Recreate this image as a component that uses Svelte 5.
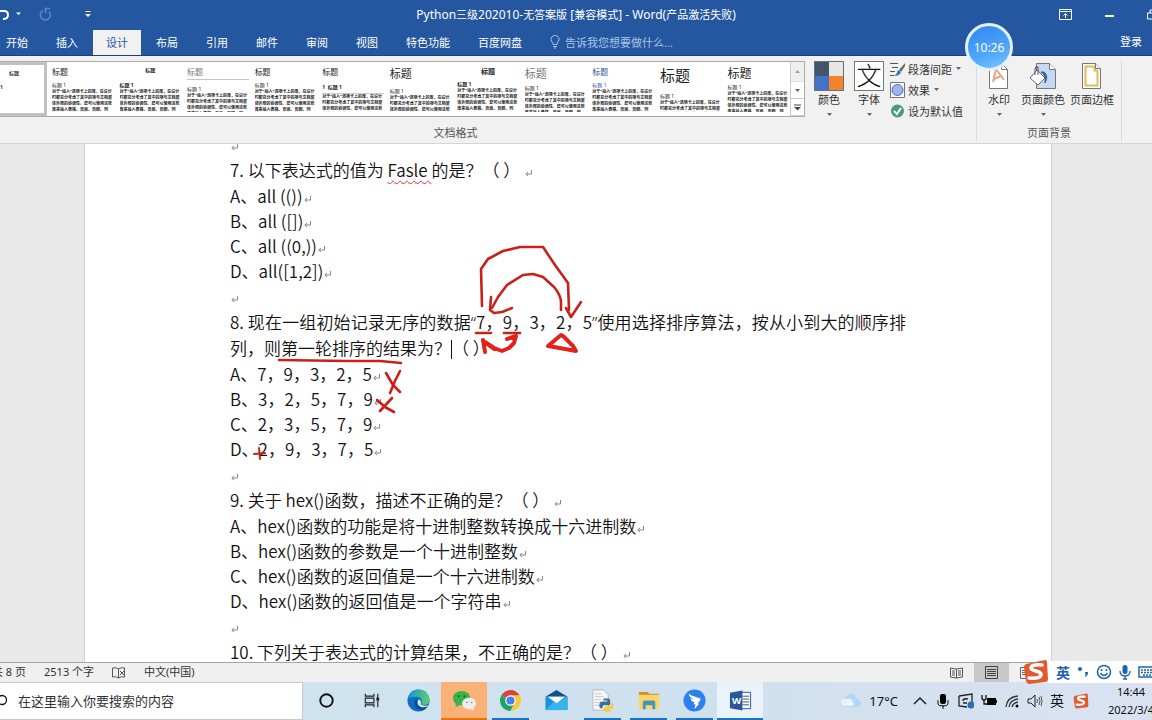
<script lang="ts">
	type Style = {
		size: number;
		space: number;
		heading?: string;
		tone?: string;
	};

	const tabs = ['开始', '插入', '设计', '布局', '引用', '邮件', '审阅', '视图', '特色功能', '百度网盘'];
	let activeTab = $state('设计');

	const sample =
		'对于"插入"选项卡上的库，在设计时都充分考虑了其中的项与文档整体外观的协调性。您可以使用这些库来插入表格、页眉、页脚、列表、封面以及';

	const styles: Style[] = [
		{ size: 8, space: 20 },
		{ size: 5, space: 20, tone: 'center bold' },
		{ size: 8, space: 24, tone: 'grey ruled' },
		{ size: 8, space: 20 },
		{ size: 8, space: 22, heading: '1  标题 1', tone: 'numbered' },
		{ size: 11, space: 26 },
		{ size: 7, space: 19, tone: 'center bold' },
		{ size: 11, space: 23, tone: 'grey' },
		{ size: 8, space: 20, tone: 'blue' },
		{ size: 15, space: 31 },
		{ size: 12, space: 22 }
	];

	const questions = [
		{
			title: '9. 关于 hex()函数，描述不正确的是？（ ）',
			options: [
				'A、hex()函数的功能是将十进制整数转换成十六进制数',
				'B、hex()函数的参数是一个十进制整数',
				'C、hex()函数的返回值是一个十六进制数',
				'D、hex()函数的返回值是一个字符串'
			]
		},
		{ title: '10. 下列关于表达式的计算结果，不正确的是？（ ）', options: [] }
	];

	const optionsSeven = ['A、all (())', 'B、all ([])', 'C、all ((0,))', 'D、all([1,2])'];
	const optionsEight = ['A、7，9，3，2，5', 'B、3，2，5，7，9', 'C、2，3，5，7，9', 'D、2，9，3，7，5'];
</script>

{#snippet mark()}
	<svg class="mark" viewBox="0 0 9 8" aria-hidden="true">
		<path d="M7.500 1v4H2M4 3 1.800 5 4 7" />
	</svg>
{/snippet}

{#snippet caret()}
	<svg class="caret" viewBox="0 0 5 3" aria-hidden="true"><path d="M0 0h5L2.500 3z" /></svg>
{/snippet}

{#snippet sogou()}
	<svg viewBox="0 0 26 26" aria-hidden="true">
		<path d="M3 5 22 1q2 0 2 2l1 17q0 3-3 3L6 25q-2 0-3-3L1 8q0-2 2-3z" fill="#e2592b" />
		<path
			d="M19 6q-11-1-11 3c0 4 11 2 10 7q-1 4-12 3"
			fill="none"
			stroke="#fff"
			stroke-width="3.500"
			stroke-linecap="round"
		/>
	</svg>
{/snippet}

<div class="window">
	<header class="chrome">
		<div class="title-bar">
			<div class="quick">
				<button aria-label="撤消">
					<svg width="26" height="14" viewBox="0 0 26 14">
						<path d="M0 4h4q4 0 4 4t-5 4" fill="none" stroke="#fff" stroke-width="2" />
						<path d="M16 5.500h5L18.500 8z" fill="#fff" />
					</svg>
				</button>
				<button aria-label="重复">
					<svg width="14" height="14" viewBox="0 0 14 14">
						<path d="M5 3.500a5 5 0 1 0 6 1M12 1.500H7.500V6" fill="none" stroke="#5e86be" stroke-width="1.600" />
					</svg>
				</button>
				<button class="customise" aria-label="自定义快速访问工具栏">
					<svg width="8" height="8" viewBox="0 0 8 8">
						<path d="M1.500 1.500h5" stroke="#fff" />
						<path d="M1 4h6L4 7z" fill="#fff" />
					</svg>
				</button>
			</div>
			<h1>
				<span>Python</span>三级<span>202010-</span>无答案版<span>{' ['}</span>兼容模式<span>{'] - Word('}</span
				>产品激活失败<span>)</span>
			</h1>
			<div class="window-buttons">
				<button aria-label="功能区显示选项">
					<svg width="13" height="11" viewBox="0 0 13 11">
						<path d="M.500 .500h12v10H.500zM.500 2.500h12M6.500 9V5M4.500 6.500l2-2 2 2" fill="none" stroke="#fff" />
					</svg>
				</button>
				<button aria-label="最小化">
					<svg width="9" height="11" viewBox="0 0 9 11"><path d="M0 7h9" stroke="#fff" stroke-width="2" /></svg>
				</button>
				<button aria-label="向下还原">
					<svg width="11" height="11" viewBox="0 0 11 11">
						<path d="M.500 4h7v6h-7zM3 4V1h7v6H8" fill="none" stroke="#fff" />
					</svg>
				</button>
			</div>
		</div>
		<nav class="tabs">
			{#each tabs as tab}
				<button class:active={tab === activeTab} onclick={() => (activeTab = tab)}>{tab}</button>
			{/each}
			<button class="tell-me">
				<svg width="10" height="14" viewBox="0 0 10 14">
					<path
						d="M3 9.500Q3 8 2 7a4 4 0 1 1 6 0q-1 1-1 2.500zM3 11.500h4M4 13h2"
						fill="none"
						stroke="#a9c3e6"
					/>
				</svg>
				告诉我您想要做什么...
			</button>
			<a class="login" href="#login">登录</a>
		</nav>
	</header>

	<section class="ribbon">
		<div class="group formats">
			<div class="group-body">
				<div class="gallery">
					<button class="current" aria-label="当前样式集">
						<b>标题</b>
						<b>1</b>
					</button>
					<div class="sets">
						{#each styles as item}
							<button class={item.tone}>
								<strong style:font-size="{item.size}px" style:height="{item.space}px">标题</strong>
								<em>{item.heading ?? '标题 1'}</em>
								<small>{sample}</small>
							</button>
						{/each}
					</div>
					<div class="gallery-scroll">
						<button class="off" aria-label="上一行">
							<svg class="caret" viewBox="0 0 5 3"><path d="M0 3h5L2.500 0z" /></svg>
						</button>
						<button aria-label="下一行">{@render caret()}</button>
						<button aria-label="其他">
							<svg width="7" height="7" viewBox="0 0 7 7">
								<path d="M0 1h7" stroke="#444" /><path d="M0 3h7L3.500 6.500z" fill="#444" />
							</svg>
						</button>
					</div>
				</div>
				<button class="large theme">
					<svg width="30" height="30" viewBox="0 0 30 30">
						<path d="M0 0h15v15H0z" fill="#44546a" />
						<path d="M15 0h15v15H15z" fill="#e7e6e6" />
						<path d="M0 15h15v15H0z" fill="#4472c4" />
						<path d="M15 15h15v15H15z" fill="#f5832c" />
						<path d="M.500 .500h29v29H.500z" fill="none" stroke="#66707c" />
					</svg>
					<span>颜色</span>
					{@render caret()}
				</button>
				<button class="large theme">
					<span class="font-icon">文</span>
					<span>字体</span>
					{@render caret()}
				</button>
				<div class="small-buttons">
					<button>
						<svg width="16" height="16" viewBox="0 0 16 16">
							<path d="M0 2.500h8M2 6.500h6M0 10.500h5M0 14.500h4" stroke="#555" />
							<path d="M15 2v3l-4 6-2-2z" fill="#666" />
							<path d="m8 9 3 2q-1 4-7 4 3-2 4-6z" fill="#3f78c0" />
						</svg>
						段落间距 {@render caret()}
					</button>
					<button>
						<svg width="16" height="16" viewBox="0 0 16 16">
							<path d="M.500 .500h14v15H.500z" fill="#fff" stroke="#6a7686" />
							<circle cx="7.500" cy="8" r="5.500" fill="#9fb4ea" stroke="#4c6ab5" />
						</svg>
						效果 {@render caret()}
					</button>
					<button>
						<svg width="16" height="16" viewBox="0 0 16 16">
							<circle cx="7.500" cy="8" r="6.500" fill="#4a9a7e" />
							<path d="m4 8 3 3 4-6" fill="none" stroke="#fff" stroke-width="2" />
						</svg>
						设为默认值
					</button>
				</div>
			</div>
			<p>文档格式</p>
		</div>
		<div class="group background">
			<div class="group-body">
				<button class="large">
					<svg width="22" height="30" viewBox="0 0 22 30">
						<path d="M1.500 2.500h12l6 6v19h-18z" fill="#fff" stroke="#777" />
						<path d="M13.500 2.500v6h6" fill="none" stroke="#777" />
						<path d="m5 21 3-13 8 11M6 18l7-3" fill="none" stroke="#e5a68d" stroke-width="2" />
					</svg>
					<span>水印</span>
					{@render caret()}
				</button>
				<button class="large">
					<svg width="28" height="30" viewBox="0 0 28 30">
						<path d="M7.500 2.500h13l6 6v19h-19z" fill="#c6d9f0" stroke="#777" />
						<path d="M20.500 2.500v6h6" fill="#fff" stroke="#777" />
						<path d="m1 17 7-8 8 8-7 7z" fill="#fff" stroke="#666" />
						<path d="M6 14V8q0-3 3-2v8" fill="none" stroke="#555" />
						<path d="M12 11q5 2 4 11 4-7-1-11z" fill="#2f6899" stroke="#2f6899" />
					</svg>
					<span>页面颜色</span>
					{@render caret()}
				</button>
				<button class="large">
					<svg width="20" height="30" viewBox="0 0 20 30">
						<path d="M.500 2.500h13l5 5v20H.500z" fill="#fff" stroke="#777" />
						<path d="M3.500 5.500h9v4h3v15h-12z" fill="none" stroke="#e3bc59" stroke-width="2" />
						<path d="M13.500 2.500v5h5" fill="#fff" stroke="#777" />
					</svg>
					<span>页面边框</span>
				</button>
			</div>
			<p>页面背景</p>
		</div>
	</section>

	<main class="desk">
		<article class="sheet">
			<div class="text">
				<p class="title">{@render mark()}</p>
				<p class="title">
					7. 以下表达式的值为 <span class="typo">{'Fasle '}</span>的是？（ ） {@render mark()}
				</p>
				{#each optionsSeven as option}
					<p>{option}{@render mark()}</p>
				{/each}
				<p class="title">{@render mark()}</p>
				<p class="title">
					8. 现在一组初始记录无序的数据<span class="quote">“</span>7，9，3，2，5<span class="quote">”</span
					>使用选择排序算法，按从小到大的顺序排列，则第一轮排序的结果为？<i class="cursor"></i>（ ）
				</p>
				{#each optionsEight as option}
					<p>{option}{@render mark()}</p>
				{/each}
				<p class="title">{@render mark()}</p>
				{#each questions as question}
					<p class="title">{question.title} {@render mark()}</p>
					{#each question.options as option}
						<p>{option}{@render mark()}</p>
					{/each}
					{#if question.options.length}
						<p class="title">{@render mark()}</p>
					{/if}
				{/each}
			</div>

			<!-- pen strokes over the page -->
			<svg class="ink" width="966" height="518" viewBox="85 144 966 518" aria-hidden="true">
				<path d="M482 306 481 269 488 259 503 251 520 247H543L555 265 568 283 569 310" />
				<path d="m566 308 5 9 10-15" />
				<path d="M561 310v-9q-1-7-7-14l-11-10-10-3-10 1-16 10-9 12-6 11" />
				<path d="m491 297-1 13 4 3 8-1 10-4" />
				<path d="M476 333h15M504 333h16" />
				<path class="thick" d="m483 340 2 12M485 342l9 6 8 3 7-3 5-5 2-7-9 3M486 343l8 6" />
				<path class="thick" d="m561 335-13 11 6 1 22 4-3-5-10-10z" />
				<path d="m279 360 68 1h33l21 2" />
				<path d="m386 373 7 12 7 7M400 371l-5 10-5 12" />
				<path d="m377 400 8 7 9 5M392 398l-12 13" />
				<path class="thin" d="m254 454 11-1M259 448l1 11" />
			</svg>
		</article>
	</main>

	<footer class="status">
		<span class="pages">共 8 页</span>
		<span>2513 个字</span>
		<svg width="14" height="12" viewBox="0 0 14 12">
			<path d="M6.500 11V2Q4 0 .500 1v9q3.500-1 6 1zM6.500 2Q9 0 12.500 1v9q-3-1-6 1M8 4l4 4M12 4 8 8" fill="none" stroke="#555" />
		</svg>
		<span>中文(中国)</span>
		<div class="views">
			<button aria-label="阅读视图">
				<svg width="13" height="12" viewBox="0 0 13 12">
					<path d="M6.500 11V2l-6-1v9zl6-1V1l-6 1M2 4h3M2 6h3M2 8h3M8 4h3M8 6h3M8 8h3" fill="none" stroke="#555" />
				</svg>
			</button>
			<button class="on" aria-label="页面视图">
				<svg width="13" height="13" viewBox="0 0 13 13">
					<path d="M.500 .500h12v12H.500zM2 3.500h9M2 5.500h9M2 7.500h9M2 9.500h9" fill="none" stroke="#444" />
				</svg>
			</button>
			<button aria-label="Web 版式视图">
				<svg width="13" height="12" viewBox="0 0 13 12">
					<path d="M.500 .500h11v11H.500zM2 3.500h6M2 5.500h6M2 7.500h6" fill="none" stroke="#666" />
				</svg>
			</button>
		</div>
	</footer>

	<footer class="taskbar">
		<label class="search">
			<svg width="8" height="14" viewBox="0 0 8 14">
				<circle cx="2" cy="6" r="4.500" fill="none" stroke="#111" stroke-width="1.300" />
			</svg>
			<input type="text" placeholder="在这里输入你要搜索的内容" aria-label="搜索" />
		</label>
		<div class="apps">
			<button aria-label="Cortana">
				<svg viewBox="0 0 24 24"><circle cx="12" cy="12" r="6.500" fill="none" stroke="#111" stroke-width="2" /></svg>
			</button>
			<button aria-label="任务视图">
				<svg viewBox="0 0 24 24">
					<path d="M4.500 5v2.500h9V5M4.500 19v-2.500h9V19M4.500 9.500h9v5h-9zM17.500 5v14" fill="none" stroke="#222" stroke-width="1.200" />
					<path d="M16 9h3v3h-3z" fill="#222" />
				</svg>
			</button>
			<button aria-label="Edge">
				<svg viewBox="0 0 24 24">
					<defs>
						<linearGradient id="edge-top" x2="1" y2="0">
							<stop stop-color="#1a8fd8" /><stop offset="1" stop-color="#5ad364" />
						</linearGradient>
					</defs>
					<circle cx="12" cy="12" r="11.500" fill="#126cc0" />
					<path d="M1 10C3-3 23-3 23.500 12c0 4-5 6-9 4 3-4 0-8-5-8-4 0-7 1-8.500 2z" fill="url(#edge-top)" />
					<path d="M10 10c-5 5-1 12 6 12 4-1 6-4 7-6-5 3-13 1-13-6z" fill="#0b4b98" />
					<path d="M14 16c5 3 9 1 9 0l-1 2c-5 2-11 1-11-4 0-2 1-3 2-3 2 2 2 3 1 5z" fill="#d8eaf3" />
				</svg>
			</button>
			<button class="alert" aria-label="微信">
				<svg viewBox="0 0 24 24">
					<path d="M9 2C4 2 0 5 0 9.500c0 3 1.500 4.500 3 6L2.500 19l4-2C13 18 18 14 18 9.500 18 5 14 2 9 2z" fill="#37b34a" />
					<path d="M17 9c-4 0-7.500 2.500-7.500 6s3.500 6 7.500 6l2 0 3 1.500-.5-3c1.500-1 2.500-2.500 2.500-4.500 0-3.500-3-6-7-6z" fill="#eee" />
					<circle cx="6" cy="7.500" r="1" fill="#145f22" /><circle cx="12" cy="7.500" r="1" fill="#145f22" />
					<circle cx="14.500" cy="14" r=".8" fill="#777" /><circle cx="19.500" cy="14" r=".8" fill="#777" />
				</svg>
			</button>
			<button class="open" aria-label="Chrome">
				<svg viewBox="0 0 24 24">
					<path d="M12 12 2.500 6.500a11 11 0 0 1 19 0z" fill="#dc4437" />
					<path d="M12 12 2.500 6.500A11 11 0 0 0 12 23l4-8z" fill="#1da462" />
					<path d="m12 12 9.500-5.500A11 11 0 0 1 12 23l5-9z" fill="#fcc934" />
					<path d="M12 6.500h9.500l-5 8z" fill="#fcc934" />
					<circle cx="12" cy="12" r="5.500" fill="#fff" /><circle cx="12" cy="12" r="4.300" fill="#4a7ff0" />
				</svg>
			</button>
			<button aria-label="邮件">
				<svg viewBox="0 0 24 24">
					<path d="M.500 8 12 1l11.500 7z" fill="#144f86" />
					<path d="M.500 8h23v14H.500z" fill="#1b93dc" />
					<path d="M3 8h18l-9 7z" fill="#fff" />
					<path d="m.500 22 9-9 2.500 2 11.500-7v14z" fill="#36b5ed" />
				</svg>
			</button>
			<button class="open" aria-label="IDLE">
				<svg viewBox="0 0 24 24">
					<path d="M2 1h11l5 5v16H2z" fill="#f7f7f7" stroke="#b9b9b9" />
					<path d="M4 5h7M4 8h9M4 11h6M4 14h5M4 17h5" stroke="#c8c8c8" />
					<path d="M13 10h5q2 0 2 2v3q0 2-2 2h-4q-2 0-2 3h-2q-2-1-1-5 0-2 3-2h5v-1h-4z" fill="#3a6f9f" />
					<path d="M21 14q3 0 2.500 4 0 3-2.500 3h-4v1h4q0 2-3 2-5 0-5-3t3-3h3q2 0 2-4z" fill="#f6cd3e" />
				</svg>
			</button>
			<button class="open" aria-label="文件资源管理器">
				<svg viewBox="0 0 24 24">
					<path d="M2 3h9l2 2h10v3H2z" fill="#cf8e25" />
					<path d="M2 6h21v15H2z" fill="#fbd565" />
					<path d="M6 21v-7q0-2 2-2h9q2 0 2 2v7h-3v-4H9v4z" fill="#4a93bd" />
				</svg>
			</button>
			<button class="open" aria-label="钉钉">
				<svg viewBox="0 0 24 24">
					<circle cx="12" cy="12" r="11.500" fill="#2f80ee" />
					<path d="M6 5c4 3 8 3 12 5 1 1-1 4-3 5l2 0-5 6 1-5h-2l1-2c-3-1-4-2-4-4l4 1C8 9 6 8 6 5z" fill="#fff" />
				</svg>
			</button>
			<button class="open front" aria-label="Word">
				<svg viewBox="0 0 24 24">
					<path d="M12 3.500h10.500v17H12z" fill="#fff" stroke="#2b579a" />
					<path d="M14 7.500h7M14 10.500h7M14 13.500h7M14 16.500h7" stroke="#2b579a" />
					<path d="m1 4 13-2.500v21L1 20z" fill="#2b579a" />
					<text x="3" y="16" font-size="10" font-weight="700" fill="#fff">W</text>
				</svg>
			</button>
		</div>
		<div class="tray">
			<button class="weather">
				<svg width="20" height="16" viewBox="0 0 20 16">
					<path d="M4 14q-4-1-4-4t4-4q1-5 6-5t6 5q4 1 4 4t-4 4z" fill="#b2d7f5" />
					<path d="M3 13q-3-1-3-4t5-3q5-2 7 3 2 3-1 4z" fill="#e8f3fc" />
				</svg>
				17°C
			</button>
			<div class="tray-icons">
				<svg viewBox="0 0 16 16"><path d="m2 11 6-6 6 6" fill="none" stroke="#222" stroke-width="1.500" /></svg>
				<svg viewBox="0 0 16 16">
					<rect x="5" y="1" width="6" height="10" rx="2" />
					<path d="M3 7v4q0 2 5 2t5-2V7M8 12v4" fill="none" stroke="#111" />
				</svg>
				<svg viewBox="0 0 16 16">
					<path d="m1 3 13-2v8M1 3v10l8 1" fill="none" stroke="#222" stroke-width="1.300" />
					<path d="M5 8q0-3 5-2M5 10h4" fill="none" stroke="#222" stroke-width="1.500" />
					<circle cx="13" cy="12" r="3.500" fill="#2a6fb5" />
				</svg>
				<svg viewBox="0 0 16 16">
					<path d="M6 5h9v7H6z" /><path d="M15 7h1v3h-1z" />
					<path d="M1 2v3q0 2 2 2t2-2V2M3 7v4h3" fill="none" stroke="#111" stroke-width="1.300" />
				</svg>
				<svg viewBox="0 0 16 16">
					<path d="M2 14Q3 4 14 3M5 14q1-7 9-8M8 14q1-4 6-5" fill="none" stroke="#333" stroke-width="1.300" />
					<circle cx="13" cy="13" r="1.500" />
				</svg>
				<svg viewBox="0 0 16 16">
					<path d="M1 6h3l4-4v12l-4-4H1z" fill="none" stroke="#222" />
					<path d="M10 6q1 2 0 4M12 4q2 4 0 8M14 3q2 5 0 10" fill="none" stroke="#555" />
				</svg>
				<span>英</span>
				{@render sogou()}
			</div>
			<time><span>14:44<br />2022/3/4</span></time>
		</div>
	</footer>

	<div class="timer">10:26</div>

	<div class="ime">
		{@render sogou()}
		<b>英</b>
		<svg width="12" height="14" viewBox="0 0 12 14">
			<circle cx="3" cy="4" r="2" fill="#1d63b0" />
			<path d="M8 7h3q0 4-3 5 1-2 0-5z" fill="#1d63b0" />
		</svg>
		<svg width="16" height="16" viewBox="0 0 16 16">
			<g fill="none" stroke="#1d63b0" stroke-width="1.500">
				<circle cx="8" cy="8" r="6.500" /><path d="M4.500 9q3.500 5 7 0M5.500 5v2M10.500 5v2" />
			</g>
		</svg>
		<svg width="12" height="16" viewBox="0 0 12 16">
			<rect x="3.500" y="1" width="5" height="9" rx="2.500" fill="#1d63b0" />
			<path d="M1 7q0 5 5 5t5-5M6 12v3M4 15h4" fill="none" stroke="#1d63b0" stroke-width="1.300" />
		</svg>
		<svg width="18" height="16" viewBox="0 0 18 16">
			<rect x="1" y="3" width="16" height="10" fill="none" stroke="#1d63b0" stroke-width="1.500" />
			<path d="M3 6h12M3 8.500h12M5 11h8" stroke="#1d63b0" stroke-width="1.300" stroke-dasharray="2 1" />
		</svg>
	</div>
</div>

<style>
	:global(body) {
		margin: 0;
		overflow: hidden;
	}

	.window {
		position: relative;
		display: flex;
		flex-direction: column;
		height: 100vh;
		overflow: hidden;
		font-family: 'Noto Sans', 'Noto Sans CJK SC', sans-serif;
		font-size: 11px;
		color: #333;
		background: #e9e9e9;
	}

	button {
		margin: 0;
		padding: 0;
		border: 0;
		background: none;
		font: inherit;
		color: inherit;
		white-space: nowrap;
	}

	svg {
		display: block;
		flex: none;
	}

	p,
	h1 {
		margin: 0;
	}

	.chrome {
		background: #24579f;
		color: #fff;
		border-bottom: 1px solid #1b427c;
	}

	.title-bar {
		display: grid;
		grid-template-columns: 1fr auto 1fr;
		align-items: center;
		height: 30px;
		box-sizing: border-box;
		padding-bottom: 2px;
	}

	.quick {
		display: flex;
		align-items: center;
		gap: 12px;
	}

	.customise {
		margin-left: 20px;
	}

	h1 {
		font-size: 11px;
		font-weight: 400;
		white-space: pre;
	}

	h1 span {
		font-size: 12px;
	}

	.window-buttons {
		display: flex;
		justify-content: flex-end;
		gap: 33px;
		margin-right: -6px;
	}

	.tabs {
		display: flex;
		gap: 2px;
		height: 25px;
		margin-left: -7px;
	}

	.tabs button {
		padding: 0 13px 2px;
	}

	.tabs .active {
		background: #f1f1f1;
		color: #24579f;
	}

	.tabs .tell-me {
		display: flex;
		align-items: center;
		gap: 5px;
		color: #a9c3e6;
	}

	.login {
		margin: 0 10px 0 auto;
		line-height: 24px;
		color: #fff;
		text-decoration: none;
	}

	.ribbon {
		display: flex;
		height: 88px;
		padding-right: 30px;
		box-sizing: border-box;
		background: #f1f1f1;
		border-bottom: 1px solid #d5d5d5;
	}

	.group {
		display: flex;
		flex-direction: column;
		justify-content: space-between;
		border-right: 1px solid #dadada;
		margin: 5px 0 2px;
	}

	.group > p {
		text-align: center;
		line-height: 16px;
		color: #555;
	}

	.group-body {
		display: flex;
	}

	.formats {
		flex: 1;
		min-width: 0;
	}

	.formats > p {
		padding-right: 65px;
	}

	.gallery {
		display: flex;
		flex: 1;
		min-width: 0;
		height: 56px;
		margin-right: 4px;
		box-sizing: border-box;
		background: #fff;
		border: 1px solid #ababab;
		border-left: 0;
	}

	.current {
		display: flex;
		flex-direction: column;
		gap: 8px;
		width: 47px;
		padding-top: 5px;
		box-sizing: border-box;
		border: 3px solid #c1c1c1;
		border-left: 0;
		font-size: 5px;
		line-height: 6px;
		text-align: left;
	}

	.current b:first-child {
		padding-left: 9px;
	}

	.sets {
		display: grid;
		grid-template-columns: repeat(11, minmax(0, 1fr));
		flex: 1;
		min-width: 0;
		height: 50px;
		overflow: hidden;
	}

	.sets button {
		display: block;
		height: 50px;
		padding: 0 1px 0 5px;
		overflow: hidden;
		text-align: left;
		white-space: normal;
		color: #222;
	}

	.sets strong {
		display: block;
		box-sizing: border-box;
		padding-top: 1px;
		line-height: calc(1em + 10px);
		font-weight: 400;
	}

	.sets em {
		display: block;
		font-size: 5px;
		font-style: normal;
		line-height: 7px;
		white-space: pre;
	}

	.sets small {
		display: block;
		height: 30px;
		overflow: hidden;
		font-size: 4px;
		font-weight: 700;
		line-height: 6px;
		word-break: break-all;
	}

	.center strong {
		text-align: center;
	}

	.bold strong,
	.bold em,
	.numbered em {
		font-weight: 700;
	}

	.grey strong {
		color: #777;
	}

	.blue strong,
	.blue em {
		color: #2f5496;
	}

	.ruled strong {
		background: linear-gradient(#c4c4c4, #c4c4c4) 0 17px / 100% 1px no-repeat;
	}

	.numbered em {
		height: 9px;
		border-bottom: 1px solid #ccc;
	}

	.gallery-scroll {
		display: grid;
		grid-template-rows: 20px 17px 17px;
		width: 13px;
		border-left: 1px solid #ccc;
	}

	.gallery-scroll button {
		display: grid;
		place-items: center;
		border-bottom: 1px solid #ccc;
	}

	.gallery-scroll .off {
		background: #e6e6e6;
		opacity: 0.6;
	}

	.caret {
		width: 5px;
		height: 3px;
		fill: #666;
	}

	.large {
		display: flex;
		flex-direction: column;
		align-items: center;
	}

	.large span {
		line-height: 18px;
	}

	.large .caret {
		margin-top: 4px;
	}

	.theme {
		width: 40px;
	}

	.theme .font-icon {
		width: 30px;
		height: 30px;
		box-sizing: border-box;
		border: 1px solid #777;
		background: #fff;
		font-size: 25px;
		font-weight: 300;
		line-height: 26px;
		color: #111;
	}

	.small-buttons {
		display: grid;
		grid-template-rows: repeat(3, 21px);
		width: 86px;
		margin: -3px 0 0 1px;
	}

	.small-buttons button {
		display: flex;
		align-items: center;
		gap: 2px;
	}

	.small-buttons .caret {
		margin-left: 2px;
	}

	.background .group-body {
		gap: 5px;
		padding: 0 7px 0 5px;
	}

	.background .large:first-child {
		width: 34px;
	}

	.desk {
		flex: 1;
		min-height: 0;
		overflow: hidden;
		padding: 0 100px 0 84px;
	}

	.sheet {
		position: relative;
		height: 100%;
		background: #fff;
		border-left: 1px solid #d2d2d2;
		border-right: 1px solid #d2d2d2;
	}

	.text {
		margin-top: -13px;
		padding: 0 145px;
		font-family: 'Noto Sans CJK SC', sans-serif;
		font-size: 17px;
		font-weight: 350;
		line-height: 25px;
		color: #111;
		text-align: justify;
		text-spacing-trim: space-all;
		float: left;
	}

	.text .title {
		min-height: 26px;
		line-height: 26px;
	}

	.quote {
		font-family: 'Noto Sans', sans-serif;
		line-height: 1;
	}

	.mark {
		display: inline-block;
		width: 9px;
		height: 8px;
		fill: none;
		stroke: #888;
	}

	.typo {
		text-decoration: underline wavy #d33 1px;
		text-underline-offset: 3px;
	}

	.cursor {
		display: inline-block;
		width: 1px;
		height: 19px;
		background: #111;
		vertical-align: -4px;
	}

	.ink {
		position: absolute;
		top: 0;
		left: 0;
		fill: none;
		stroke: #c9211a;
		stroke-width: 2.6;
		stroke-linecap: round;
		stroke-linejoin: round;
		pointer-events: none;
	}

	.ink .thick {
		stroke: #e0241b;
		stroke-width: 4;
	}

	.ink .thin {
		stroke-width: 2;
	}

	.status {
		display: flex;
		align-items: center;
		gap: 18px;
		height: 20px;
		box-sizing: border-box;
		background: #f0f0f0;
		border-top: 1px solid #a5a5a5;
		line-height: 18px;
	}

	.status > span {
		padding-bottom: 2px;
	}

	.pages {
		margin-left: -8px;
	}

	.views {
		display: flex;
		height: 100%;
		margin: 0 108px 0 auto;
	}

	.views button {
		display: grid;
		place-items: center;
		width: 35px;
	}

	.views .on {
		background: #c8c8c8;
	}

	.taskbar {
		display: flex;
		height: 38px;
		background: linear-gradient(90deg, #cfe5ef, #cfe0ee 60%, #dae2f1);
		color: #111;
	}

	.search {
		display: flex;
		align-items: center;
		gap: 10px;
		width: 303px;
		box-sizing: border-box;
		background: #fff;
		border: 1px solid #c9c9c9;
		border-left: 0;
	}

	.search input {
		flex: 1;
		min-width: 0;
		padding: 0;
		border: 0;
		outline: 0;
		background: none;
		font: inherit;
		font-size: 13px;
	}

	.search input::placeholder {
		color: #333;
	}

	.apps {
		display: flex;
	}

	.apps button {
		display: grid;
		place-items: center;
		width: 46px;
		box-sizing: border-box;
		border-bottom: 2px solid transparent;
	}

	.apps svg {
		width: 23px;
		height: 23px;
	}

	.apps .open {
		background: linear-gradient(#1972c4, #1972c4) center bottom / 37px 2px no-repeat border-box;
	}

	.apps .front {
		background-color: #eaf2fa;
		background-size: 46px 2px;
	}

	.apps .alert {
		background: #fcb276;
		border-color: #e8730c;
	}

	.tray {
		display: flex;
		align-items: center;
		margin-left: auto;
	}

	.weather {
		display: flex;
		align-items: center;
		gap: 8px;
		font-size: 13px;
		margin-right: 14px;
	}

	.tray-icons {
		display: flex;
		align-items: center;
		gap: 7px;
		margin-right: 19px;
	}

	.tray-icons svg {
		width: 16px;
		height: 16px;
	}

	.tray-icons span {
		width: 16px;
		font-size: 14px;
		line-height: 16px;
	}

	time {
		width: 44px;
		line-height: 18px;
		white-space: nowrap;
	}

	time span {
		display: inline-block;
		text-align: center;
	}

	.timer {
		position: absolute;
		top: 23px;
		right: 139px;
		width: 48px;
		height: 48px;
		box-sizing: border-box;
		border: 3px solid #e3f1fd;
		border-radius: 50%;
		background: linear-gradient(160deg, #2f86f0, #4fa5fa 60%, #7cc6ff);
		color: #fff;
		font-size: 12px;
		line-height: 43px;
		text-align: center;
	}

	.ime {
		position: absolute;
		right: 0;
		bottom: 37px;
		display: flex;
		align-items: center;
		gap: 7px;
		width: 113px;
		height: 22px;
		background: #fff;
		color: #1d63b0;
		font-size: 14px;
	}

	.ime svg:first-child {
		width: 26px;
		height: 26px;
		margin-left: -16px;
	}
</style>
